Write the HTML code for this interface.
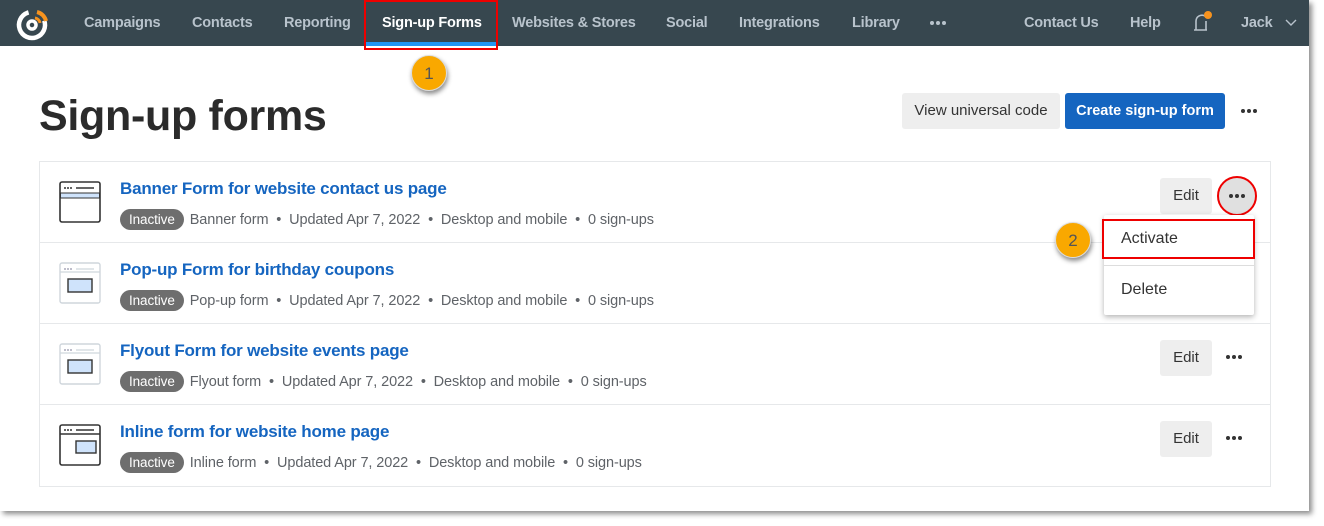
<!DOCTYPE html>
<html><head><meta charset="utf-8"><style>
*{box-sizing:border-box;margin:0;padding:0}
body{width:1324px;height:526px;background:#fff;font-family:"Liberation Sans",Arial,sans-serif;position:relative;overflow:hidden}
.page{position:absolute;left:0;top:0;width:1309px;height:511px;background:#fff;box-shadow:3px 3px 5px rgba(0,0,0,.45)}
.nav{position:absolute;left:0;top:0;width:1309px;height:46px;background:#37474f}
.nav span{position:absolute;top:15px;font-size:14.5px;color:#b8c3cc;font-weight:bold;letter-spacing:-.2px}
.abs{position:absolute}
h1{position:absolute;left:39px;top:92px;font-size:43px;color:#2b2b2b;font-weight:bold;letter-spacing:-.3px}
.btn{position:absolute;border-radius:3px;font-size:15px;text-align:center}
.list{position:absolute;left:39px;top:161px;width:1232px;height:326px;border:1px solid #e6e8ea}
.row{position:absolute;left:0;width:1230px;height:81px;border-bottom:1px solid #e6e8ea}
.title{position:absolute;left:80px;top:17px;font-size:17px;color:#1565c0;font-weight:bold;letter-spacing:-.2px}
.meta{position:absolute;left:80px;top:47px;font-size:14.5px;color:#5f6368;white-space:nowrap;letter-spacing:-.1px}
.badge{display:inline-block;background:#6e6e6e;color:#fff;border-radius:11px;padding:3px 9px;font-size:13.5px;margin-right:6px}
.edit{position:absolute;left:1120px;top:16px;width:52px;height:36px;background:#eee;border-radius:3px;font-size:15px;color:#333;text-align:center;line-height:36px}
.dots{position:absolute;left:1185px;top:30px}
.ico{position:absolute;left:19px;top:19px}
.num{position:absolute;width:36px;height:36px;border-radius:50%;background:#f9a800;color:#555;font-size:17px;text-align:center;line-height:36px;box-shadow:1px 3px 5px rgba(0,0,0,.45);border:1.5px solid #ddd}
</style></head><body>
<div class="page">
<div class="nav">
<svg class="abs" style="left:15px;top:4px" width="38" height="38" viewBox="0 0 38 38"><circle cx="17" cy="21" r="13" fill="none" stroke="#fff" stroke-width="4.5" stroke-dasharray="62 20" transform="rotate(-20 17 21)"/><circle cx="17" cy="21" r="4" fill="none" stroke="#fff" stroke-width="3.5"/><path d="M22 8a12 12 0 0 1 9 9" stroke="#f7931e" stroke-width="4" fill="none"/><path d="M20 14a6 6 0 0 1 5 5" stroke="#f7931e" stroke-width="3" fill="none"/></svg>
<span style="left:84px">Campaigns</span>
<span style="left:192px">Contacts</span>
<span style="left:284px">Reporting</span>
<span style="left:382px;color:#fff">Sign-up Forms</span>
<div class="abs" style="left:366px;top:42px;width:130px;height:4px;background:#2196f3"></div>
<span style="left:512px">Websites &amp; Stores</span>
<span style="left:666px">Social</span>
<span style="left:739px">Integrations</span>
<span style="left:852px">Library</span>
<svg class="abs" style="left:929px;top:20px" width="20" height="6"><circle cx="3" cy="3" r="2" fill="#b8c3cc"/><circle cx="9" cy="3" r="2" fill="#b8c3cc"/><circle cx="15" cy="3" r="2" fill="#b8c3cc"/></svg>
<span style="left:1024px">Contact Us</span>
<span style="left:1130px">Help</span>
<svg class="abs" style="left:1191px;top:10px" width="24" height="24" viewBox="0 0 24 24"><path d="M3 20h13M5 20v-9a6 6 0 0 1 9-5M15 11v9" stroke="#b8c3cc" stroke-width="1.6" fill="none"/><circle cx="17" cy="5" r="4" fill="#f7931e"/></svg>
<span style="left:1241px">Jack</span>
<svg class="abs" style="left:1285px;top:19px" width="12" height="8"><path d="M1 1l5 5 5-5" stroke="#b8c3cc" stroke-width="1.4" fill="none"/></svg>
</div>
<div class="abs" style="left:364px;top:0;width:134px;height:50px;border:2.5px solid #e00"></div>
<div class="num" style="left:411px;top:55px">1</div>
<h1>Sign-up forms</h1>
<div class="btn" style="left:902px;top:93px;width:158px;height:36px;line-height:36px;background:#eee;color:#333">View universal code</div>
<div class="btn" style="left:1065px;top:93px;width:160px;height:36px;line-height:36px;background:#1565c0;color:#fff;font-weight:bold;font-size:14.5px">Create sign-up form</div>
<svg class="abs" style="left:1240px;top:108px" width="18" height="6"><circle cx="3" cy="3" r="2" fill="#333"/><circle cx="9" cy="3" r="2" fill="#333"/><circle cx="15" cy="3" r="2" fill="#333"/></svg>
<div class="list">
<div class="row" style="top:0">
<svg class="ico" width="42" height="42" viewBox="0 0 42 42"><rect x="1" y="1" width="40" height="40" rx="2" fill="#fff" stroke="#333" stroke-width="1.6"/><rect x="1.5" y="12" width="39" height="5" fill="#cfe3fb" stroke="#333" stroke-width="1"/><path d="M17 7h18" stroke="#333" stroke-width="1.5"/><circle cx="6" cy="7" r="1" fill="#333"/><circle cx="9" cy="7" r="1" fill="#333"/><circle cx="12" cy="7" r="1" fill="#333"/></svg>
<div class="title">Banner Form for website contact us page</div>
<div class="meta"><span class="badge">Inactive</span>Banner form &nbsp;•&nbsp; Updated Apr 7, 2022 &nbsp;•&nbsp; Desktop and mobile &nbsp;•&nbsp; 0 sign-ups</div>
<div class="edit">Edit</div>
<div class="abs" style="left:1177px;top:14px;width:40px;height:40px;border-radius:50%;background:#e0e0e0;border:2.5px solid #e00"><svg class="abs" style="left:9px;top:15px" width="18" height="6"><circle cx="3" cy="3" r="2" fill="#333"/><circle cx="9" cy="3" r="2" fill="#333"/><circle cx="15" cy="3" r="2" fill="#333"/></svg></div>
</div>
<div class="row" style="top:81px">
<svg class="ico" width="42" height="42" viewBox="0 0 42 42"><rect x="1" y="1" width="40" height="40" rx="2" fill="#fff" stroke="#cfd6dc" stroke-width="1.4"/><path d="M1 10h40M17 7h18" stroke="#cfd6dc" stroke-width="1.2"/><circle cx="6" cy="7" r="1" fill="#aab"/><circle cx="9" cy="7" r="1" fill="#aab"/><circle cx="12" cy="7" r="1" fill="#aab"/><rect x="9" y="17" width="24" height="13" fill="#cfe3fb" stroke="#333" stroke-width="1.4"/></svg>
<div class="title">Pop-up Form for birthday coupons</div>
<div class="meta"><span class="badge">Inactive</span>Pop-up form &nbsp;•&nbsp; Updated Apr 7, 2022 &nbsp;•&nbsp; Desktop and mobile &nbsp;•&nbsp; 0 sign-ups</div>
</div>
<div class="row" style="top:162px">
<svg class="ico" width="42" height="42" viewBox="0 0 42 42"><rect x="1" y="1" width="40" height="40" rx="2" fill="#fff" stroke="#cfd6dc" stroke-width="1.4"/><path d="M1 10h40M17 7h18" stroke="#cfd6dc" stroke-width="1.2"/><circle cx="6" cy="7" r="1" fill="#aab"/><circle cx="9" cy="7" r="1" fill="#aab"/><circle cx="12" cy="7" r="1" fill="#aab"/><rect x="9" y="17" width="24" height="13" fill="#cfe3fb" stroke="#333" stroke-width="1.4"/></svg>
<div class="title">Flyout Form for website events page</div>
<div class="meta"><span class="badge">Inactive</span>Flyout form &nbsp;•&nbsp; Updated Apr 7, 2022 &nbsp;•&nbsp; Desktop and mobile &nbsp;•&nbsp; 0 sign-ups</div>
<div class="edit">Edit</div><svg class="dots" width="18" height="6"><circle cx="3" cy="3" r="2" fill="#333"/><circle cx="9" cy="3" r="2" fill="#333"/><circle cx="15" cy="3" r="2" fill="#333"/></svg>
</div>
<div class="row" style="top:243px;border-bottom:none">
<svg class="ico" width="42" height="42" viewBox="0 0 42 42"><rect x="1" y="1" width="40" height="40" rx="2" fill="#fff" stroke="#333" stroke-width="1.6"/><path d="M1 10h40M17 6h18" stroke="#333" stroke-width="1.4"/><circle cx="6" cy="6" r="1" fill="#333"/><circle cx="9" cy="6" r="1" fill="#333"/><circle cx="12" cy="6" r="1" fill="#333"/><rect x="17" y="17" width="20" height="12" fill="#cfe3fb" stroke="#333" stroke-width="1.4"/></svg>
<div class="title">Inline form for website home page</div>
<div class="meta"><span class="badge">Inactive</span>Inline form &nbsp;•&nbsp; Updated Apr 7, 2022 &nbsp;•&nbsp; Desktop and mobile &nbsp;•&nbsp; 0 sign-ups</div>
<div class="edit">Edit</div><svg class="dots" width="18" height="6"><circle cx="3" cy="3" r="2" fill="#333"/><circle cx="9" cy="3" r="2" fill="#333"/><circle cx="15" cy="3" r="2" fill="#333"/></svg>
</div>
</div>
<div class="abs" style="left:1104px;top:215px;width:150px;height:100px;background:#fff;box-shadow:0 2px 6px rgba(0,0,0,.3);border-radius:2px">
<div class="abs" style="left:-2px;top:4px;width:153px;height:40px;border:2.5px solid #e00;font-size:16px;color:#333;line-height:35px;padding-left:17px">Activate</div>
<div class="abs" style="left:0;top:50px;width:150px;border-top:1px solid #ddd"></div>
<div class="abs" style="left:17px;top:66px;font-size:16px;color:#333">Delete</div>
</div>
<div class="num" style="left:1055px;top:222px">2</div>
</div>
</body></html>
